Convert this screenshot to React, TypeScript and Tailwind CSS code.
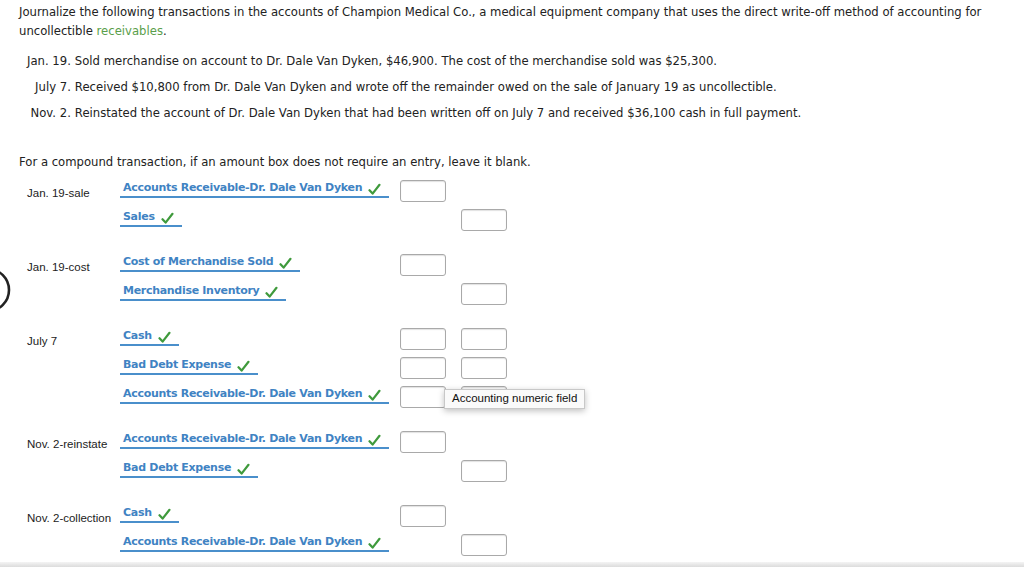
import React from 'react';

const body = { fontFamily: '"DejaVu Sans", Verdana, sans-serif' };
const narrow = { fontFamily: '"Liberation Sans", Arial, sans-serif' };

type Line = { account: string; col: 'dr' | 'cr' | 'both' };
type Entry = { label: string; lines: Line[] };

const entries: Entry[] = [
    {
        label: 'Jan. 19-sale',
        lines: [
            { account: 'Accounts Receivable-Dr. Dale Van Dyken', col: 'dr' },
            { account: 'Sales', col: 'cr' },
        ],
    },
    {
        label: 'Jan. 19-cost',
        lines: [
            { account: 'Cost of Merchandise Sold', col: 'dr' },
            { account: 'Merchandise Inventory', col: 'cr' },
        ],
    },
    {
        label: 'July 7',
        lines: [
            { account: 'Cash', col: 'both' },
            { account: 'Bad Debt Expense', col: 'both' },
            { account: 'Accounts Receivable-Dr. Dale Van Dyken', col: 'both' },
        ],
    },
    {
        label: 'Nov. 2-reinstate',
        lines: [
            { account: 'Accounts Receivable-Dr. Dale Van Dyken', col: 'dr' },
            { account: 'Bad Debt Expense', col: 'cr' },
        ],
    },
    {
        label: 'Nov. 2-collection',
        lines: [
            { account: 'Cash', col: 'dr' },
            { account: 'Accounts Receivable-Dr. Dale Van Dyken', col: 'cr' },
        ],
    },
];

function Check() {
    return (
        <svg width="13" height="13" viewBox="0 0 13 13" className="inline-block ml-[6px] -mb-[2px]">
            <path d="M1.5 7.2 L4.6 10.6 L11.5 1.8" fill="none" stroke="#3f9a3c" strokeWidth="2.2" strokeLinecap="round" strokeLinejoin="round" />
        </svg>
    );
}

function AmountBox({ hidden }: { hidden?: boolean }) {
    return (
        <div className={`w-[46px] h-[22px] rounded-[3px] border border-[#a9a9a9] bg-white shadow-[inset_0_1px_1px_rgba(0,0,0,0.12)] ${hidden ? 'invisible' : ''}`}></div>
    );
}

export default function App() {
    return (
        <div className="relative w-[1024px] h-[567px] overflow-hidden bg-white text-[#222]" style={body}>
            {/* intro */}
            <div className="pl-[19px] pr-[30px] pt-[3px] text-[11.65px] leading-[19px]">
                <p>
                    Journalize the following transactions in the accounts of Champion Medical Co., a medical equipment company that uses the direct write-off method of accounting for uncollectible <span className="text-[#5a9e4b]">receivables</span>.
                </p>
                <table className="mt-[4px] ml-[8px] border-separate border-spacing-y-[7px]">
                    <tbody>
                        <tr>
                            <td className="text-right pr-[4px] whitespace-nowrap">Jan. 19.</td>
                            <td>Sold merchandise on account to Dr. Dale Van Dyken, $46,900. The cost of the merchandise sold was $25,300.</td>
                        </tr>
                        <tr>
                            <td className="text-right pr-[4px] whitespace-nowrap">July 7.</td>
                            <td>Received $10,800 from Dr. Dale Van Dyken and wrote off the remainder owed on the sale of January 19 as uncollectible.</td>
                        </tr>
                        <tr>
                            <td className="text-right pr-[4px] whitespace-nowrap">Nov. 2.</td>
                            <td>Reinstated the account of Dr. Dale Van Dyken that had been written off on July 7 and received $36,100 cash in full payment.</td>
                        </tr>
                    </tbody>
                </table>
                <p className="mt-[23px]">For a compound transaction, if an amount box does not require an entry, leave it blank.</p>
            </div>

            {/* journal */}
            <div className="pl-[27px] mt-[8px]">
                {entries.map((e, gi) => (
                    <div key={gi} className={`flex ${gi > 0 ? 'mt-[23px]' : ''}`}>
                        <div className="w-[93px] pt-[6px] text-[11.5px] leading-[14px] whitespace-nowrap" style={narrow}>{e.label}</div>
                        <div className="flex flex-col gap-[7px]">
                            {e.lines.map((l, li) => (
                                <div key={li} className="flex items-start h-[22px]">
                                    <div className="w-[280px] flex items-start">
                                        <span className="mt-[1px] whitespace-nowrap border-b-2 border-[#4a8fcb] pl-[3px] pr-[8px] pb-[1px] text-[11px] leading-[14px] font-bold tracking-[-0.3px] text-[#3f83c3]">
                                            {l.account}
                                            <Check />
                                        </span>
                                    </div>
                                    <AmountBox hidden={l.col === 'cr'} />
                                    <div className="w-[15px]"></div>
                                    <AmountBox hidden={l.col === 'dr'} />
                                </div>
                            ))}
                        </div>
                    </div>
                ))}
            </div>

            {/* tooltip */}
            <div className="absolute left-[444px] top-[389px] h-[20px] px-[7px] flex items-center border border-[#c8c8c8] bg-[#fafafa] shadow-[0_2px_6px_rgba(0,0,0,0.25)] text-[11.5px] text-[#111]" style={narrow}>
                Accounting numeric field
            </div>

            {/* partial ring at left edge */}
            <svg className="absolute left-0 top-[266px]" width="14" height="48" viewBox="0 0 14 48">
                <circle cx="-12" cy="24" r="21" fill="none" stroke="#222" strokeWidth="2.6" />
            </svg>

            {/* bottom shade */}
            <div className="absolute left-0 right-0 bottom-0 h-[5px] bg-gradient-to-b from-[#f4f4f4] to-[#dcdcdc]"></div>
        </div>
    );
}
